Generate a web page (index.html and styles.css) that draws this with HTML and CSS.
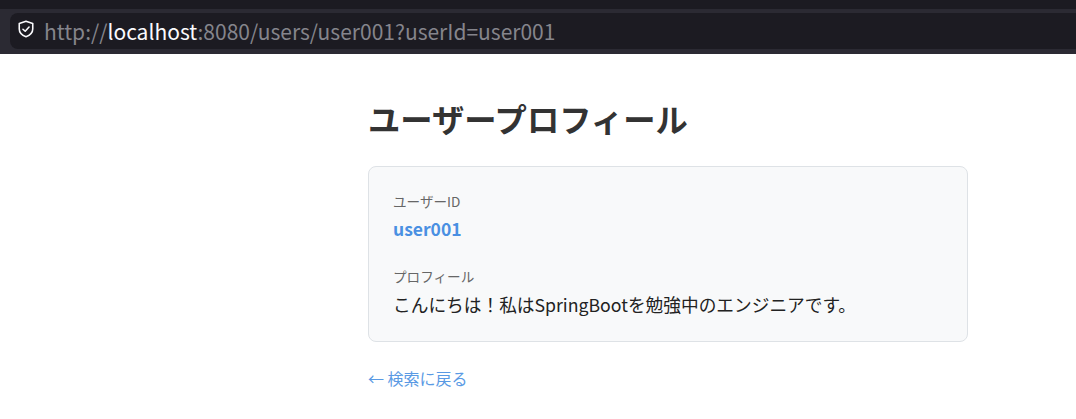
FILE: index.html
```
<!DOCTYPE html>
<html lang="ja">
<head>
<meta charset="utf-8">
<title>ユーザープロフィール</title>
<link rel="stylesheet" href="styles.css">
</head>
<body>
<header class="chrome">
  <div class="urlbar">
    <svg class="shield" viewBox="0 0 16 16" width="18" height="18" fill="none" stroke="#fbfbfe" stroke-width="1.4" stroke-linejoin="round" stroke-linecap="round">
      <path d="M8 1.2 14 3.2V8c0 3.2-2.6 5.6-6 6.8C4.600 13.600 2 11.200 2 8V3.200Z"/>
      <path d="M5.300 8.200 7.300 10 10.700 6.300"/>
    </svg>
    <span class="url"><span class="dim">http://</span><span class="host">localhost</span><span class="dim">:8080/users/user001?userId=user001</span></span>
  </div>
</header>
<main class="page">
  <h1 class="title">ユーザープロフィール</h1>
  <section class="card">
    <div class="field">
      <div class="label">ユーザーID</div>
      <div class="userid">user001</div>
    </div>
    <div class="field">
      <div class="label">プロフィール</div>
      <div class="bio">こんにちは！私はSpringBootを勉強中のエンジニアです。</div>
    </div>
  </section>
  <a class="back" href="#">← 検索に戻る</a>
</main>
</body>
</html>
```
FILE: styles.css
```
* { box-sizing: border-box; }
html, body { margin: 0; padding: 0; background: #fff; }
body { font-family: "Noto Sans CJK JP", "Noto Sans", sans-serif; height: 419px; overflow: hidden; }
.chrome { height: 54px; background: #2b2a33; border-top: 9px solid #1c1b22; padding: 4px 0 4px 10px; }
.urlbar { height: 36px; background: #1c1b22; border-radius: 8px 0 0 8px; display: flex; align-items: center; padding-left: 7px; }
.shield { flex: none; margin-top: -5px; }
.url { margin-left: 9px; font-size: 21px; line-height: 36px; white-space: nowrap; }
.dim { color: #85858c; }
.host { color: #fbfbfe; }
.page { width: 600px; margin-left: 368px; }
.title { margin: 41px 0 25px; font-size: 32.3px; line-height: 46px; font-weight: 700; color: #333; }
.card { height: 176px; background: #f8f9fa; border: 1px solid #dee2e6; border-radius: 8px; padding: 24px; }
.field + .field { margin-top: 24px; }
.label { font-size: 13.6px; line-height: 20px; color: #666; }
.userid { margin-top: 5px; font-size: 17.5px; line-height: 26px; font-weight: 700; color: #4a90e2; }
.bio { margin-top: 6px; font-size: 17.7px; line-height: 24px; color: #222; }
.back { display: block; margin-top: 24px; font-size: 16px; line-height: 24px; color: #5a9ae4; text-decoration: none; }
```
